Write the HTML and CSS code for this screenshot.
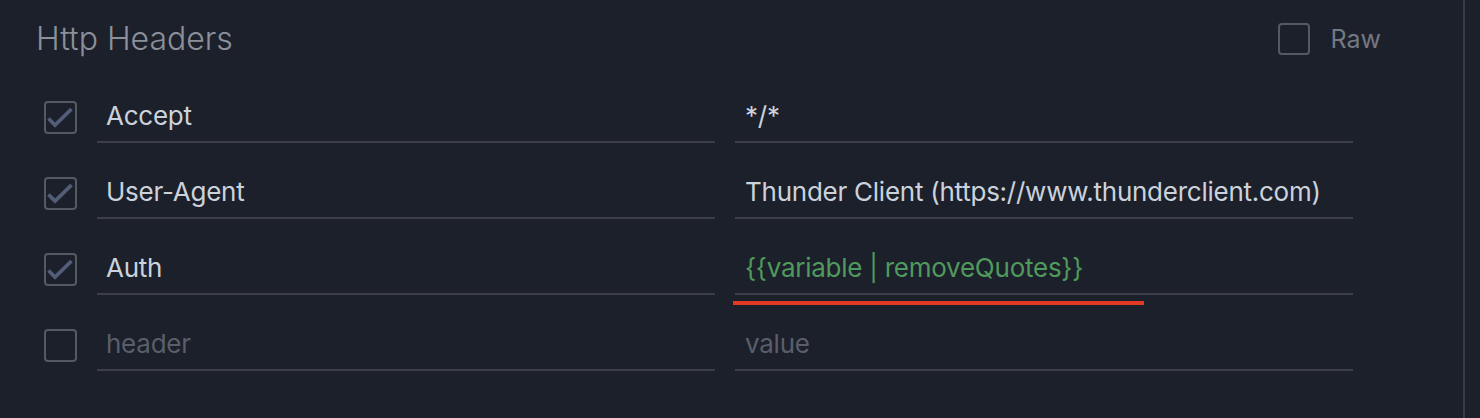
FILE: index.html
```html
<!DOCTYPE html>
<html>
<head>
<meta charset="utf-8">
<link rel="stylesheet" href="styles.css">
</head>
<body>
<div class="panel">
  <div class="head">
    <h1 class="title">Http Headers</h1>
    <label class="raw">
      <span class="box"></span>
      <span class="raw-text">Raw</span>
    </label>
  </div>
  <div class="rows">
    <div class="row">
      <span class="box checked"><svg viewBox="0 0 33 33"><polyline points="4.5,17.5 11,24 27.5,8"/></svg></span>
      <div class="field key">Accept</div>
      <div class="field val">*/*</div>
    </div>
    <div class="row">
      <span class="box checked"><svg viewBox="0 0 33 33"><polyline points="4.5,17.5 11,24 27.5,8"/></svg></span>
      <div class="field key">User-Agent</div>
      <div class="field val">Thunder Client (https://www.thunderclient.com)</div>
    </div>
    <div class="row">
      <span class="box checked"><svg viewBox="0 0 33 33"><polyline points="4.5,17.5 11,24 27.5,8"/></svg></span>
      <div class="field key">Auth</div>
      <div class="field val var">{{variable | removeQuotes}}<span class="mark"></span></div>
    </div>
    <div class="row">
      <span class="box"></span>
      <div class="field key ph">header</div>
      <div class="field val ph">value</div>
    </div>
  </div>
</div>
</body>
</html>
```
FILE: styles.css
```css
html, body {
  margin: 0;
  padding: 0;
  background: #1c202b;
  height: 100%;
}
body {
  font-family: Inter, "Noto Sans", "Liberation Sans", sans-serif;
  color: #cbd2dc;
}
.panel {
  width: 1465px;
  height: 418px;
  box-sizing: border-box;
  border-right: 2px solid #393c45;
}
.head {
  display: flex;
  align-items: center;
  justify-content: space-between;
  padding: 17px 82px 0 36px;
  height: 44px;
}
.title {
  margin: 0;
  font-size: 32px;
  font-weight: 300;
  color: #8b909a;
  line-height: 44px;
  letter-spacing: 0;
}
.raw {
  display: flex;
  align-items: center;
  gap: 21px;
}
.raw-text {
  font-size: 25px;
  color: #737882;
}
.raw .box {
  width: 32px;
  height: 32px;
}
.box {
  width: 33px;
  height: 33px;
  box-sizing: border-box;
  border: 2px solid #555961;
  border-radius: 4px;
  display: block;
  position: relative;
}
.box svg {
  position: absolute;
  left: -2px;
  top: -2px;
  width: 33px;
  height: 33px;
}
.box polyline {
  fill: none;
  stroke: #525d77;
  stroke-width: 3.8;
}
.rows {
  padding: 31px 0 0 44px;
  display: flex;
  flex-direction: column;
  gap: 25px;
}
.row {
  display: grid;
  grid-template-columns: 33px 618px 618px;
  column-gap: 20px;
  align-items: center;
  height: 51px;
}
.field {
  position: relative;
  height: 51px;
  box-sizing: border-box;
  border-bottom: 2px solid #3c3f48;
  padding: 0 9px;
  font-size: 26px;
  letter-spacing: -0.25px;
  line-height: 47px;
  white-space: nowrap;
}
.val {
  padding-left: 10px;
}
.var {
  color: #4f9a5c;
}
.ph {
  color: #5a5e69;
}
.mark {
  position: absolute;
  left: -2px;
  top: 57px;
  width: 411px;
  height: 4px;
  background: #e23a22;
}
```
